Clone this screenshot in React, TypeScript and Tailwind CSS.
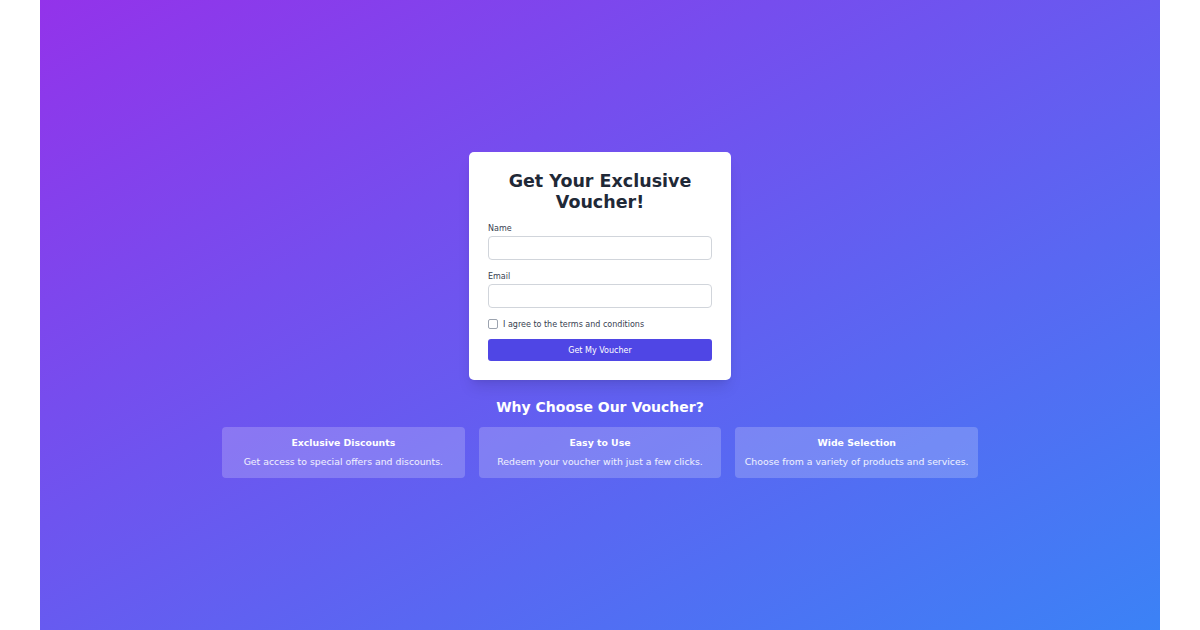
import React from "react";

const features = [
  { title: "Exclusive Discounts", text: "Get access to special offers and discounts." },
  { title: "Easy to Use", text: "Redeem your voucher with just a few clicks." },
  { title: "Wide Selection", text: "Choose from a variety of products and services." },
];

export default function App() {
  return (
    <div className="bg-white font-['DejaVu_Sans',sans-serif]">
      <div className="mx-10 min-h-[630px] flex flex-col items-center justify-center bg-[linear-gradient(to_bottom_right,#9333ea,#3b82f6)]">
        <div className="w-[262px] bg-white rounded-[5px] shadow-[0_10px_15px_-3px_rgba(0,0,0,0.1),0_4px_6px_-4px_rgba(0,0,0,0.1)] p-[19px]">
          <h1 className="text-center text-[17.5px] leading-[21px] font-bold text-[#1f2937]">
            Get Your Exclusive Voucher!
          </h1>
          <form className="mt-[9px] flex flex-col" onSubmit={(e) => e.preventDefault()}>
            <label className="pt-[1px] text-[8px] leading-[12px] text-[#374151]">Name</label>
            <input
              type="text"
              className="mt-[1px] h-[24px] w-full rounded-[4px] border border-[#d1d5db] px-2 text-[8px] outline-none"
            />
            <label className="mt-[10px] pt-[1px] text-[8px] leading-[12px] text-[#374151]">Email</label>
            <input
              type="email"
              className="mt-[1px] h-[24px] w-full rounded-[4px] border border-[#d1d5db] px-2 text-[8px] outline-none"
            />
            <div className="mt-[10px] flex items-center gap-[5px] h-[12px]">
              <span className="w-[10px] h-[10px] rounded-[2px] border border-[#9ca3af] bg-white" />
              <span className="pt-[1px] text-[8px] leading-[12px] text-[#374151]">
                I agree to the terms and conditions
              </span>
            </div>
            <button
              type="submit"
              className="mt-[9px] h-[22px] w-full rounded-[3px] bg-[#4f46e5] pt-[1px] text-white text-[8px] leading-[12px]"
            >
              Get My Voucher
            </button>
          </form>
        </div>

        <h2 className="mt-[17px] text-[14px] leading-[20px] font-bold text-white">
          Why Choose Our Voucher?
        </h2>
        <div className="mt-[10px] grid grid-cols-3 gap-[14px] w-[756px]">
          {features.map((f) => (
            <div
              key={f.title}
              className="rounded-[4px] bg-white/20 pt-[9px] pb-[9px] px-2 text-center text-white"
            >
              <div className="text-[9.33px] leading-[14px] font-bold">{f.title}</div>
              <div className="mt-[5px] text-[9.33px] leading-[14px] text-white/90">{f.text}</div>
            </div>
          ))}
        </div>
      </div>
    </div>
  );
}
